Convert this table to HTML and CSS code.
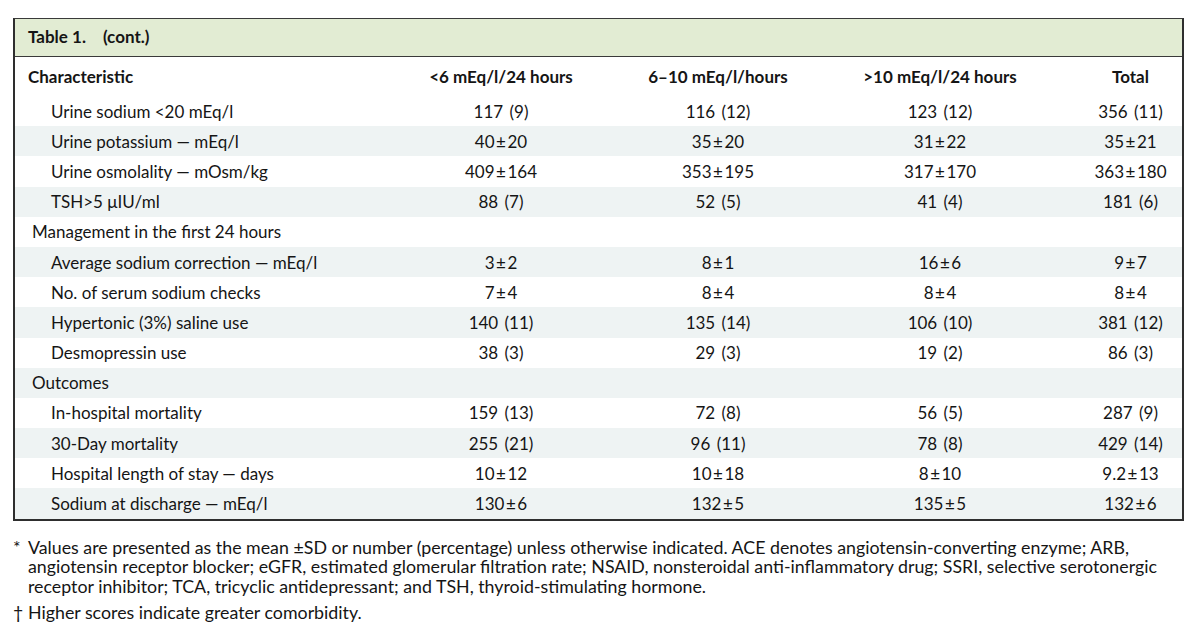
FILE: index.html
```html
<!DOCTYPE html>
<html>
<head>
<meta charset="utf-8">
<link rel="stylesheet" href="styles.css">
</head>
<body>
<div class="page">
  <div class="tbl">
    <div class="title"><span>Table 1.</span><span class="cont">(cont.)</span></div>
    <div class="row head">
      <div class="c1">Characteristic</div>
      <div class="c">&lt;6 mEq/l/24 hours</div>
      <div class="c">6–10 mEq/l/hours</div>
      <div class="c">&gt;10 mEq/l/24 hours</div>
      <div class="c c5">Total</div>
    </div>
    <div class="row"><div class="c1 sub">Urine sodium &lt;20 mEq/l</div><div class="c">117 (9)</div><div class="c">116 (12)</div><div class="c">123 (12)</div><div class="c c5">356 (11)</div></div>
    <div class="row alt"><div class="c1 sub">Urine potassium — mEq/l</div><div class="c">40<span class="pm">±</span>20</div><div class="c">35<span class="pm">±</span>20</div><div class="c">31<span class="pm">±</span>22</div><div class="c c5">35<span class="pm">±</span>21</div></div>
    <div class="row"><div class="c1 sub">Urine osmolality — mOsm/kg</div><div class="c">409<span class="pm">±</span>164</div><div class="c">353<span class="pm">±</span>195</div><div class="c">317<span class="pm">±</span>170</div><div class="c c5">363<span class="pm">±</span>180</div></div>
    <div class="row alt"><div class="c1 sub">TSH&gt;5 μIU/ml</div><div class="c">88 (7)</div><div class="c">52 (5)</div><div class="c">41 (4)</div><div class="c c5">181 (6)</div></div>
    <div class="row"><div class="c1 sec">Management in the first 24 hours</div><div class="c"></div><div class="c"></div><div class="c"></div><div class="c c5"></div></div>
    <div class="row alt"><div class="c1 sub">Average sodium correction — mEq/l</div><div class="c">3<span class="pm">±</span>2</div><div class="c">8<span class="pm">±</span>1</div><div class="c">16<span class="pm">±</span>6</div><div class="c c5">9<span class="pm">±</span>7</div></div>
    <div class="row"><div class="c1 sub">No. of serum sodium checks</div><div class="c">7<span class="pm">±</span>4</div><div class="c">8<span class="pm">±</span>4</div><div class="c">8<span class="pm">±</span>4</div><div class="c c5">8<span class="pm">±</span>4</div></div>
    <div class="row alt"><div class="c1 sub">Hypertonic (3%) saline use</div><div class="c">140 (11)</div><div class="c">135 (14)</div><div class="c">106 (10)</div><div class="c c5">381 (12)</div></div>
    <div class="row"><div class="c1 sub">Desmopressin use</div><div class="c">38 (3)</div><div class="c">29 (3)</div><div class="c">19 (2)</div><div class="c c5">86 (3)</div></div>
    <div class="row alt"><div class="c1 sec">Outcomes</div><div class="c"></div><div class="c"></div><div class="c"></div><div class="c c5"></div></div>
    <div class="row"><div class="c1 sub">In-hospital mortality</div><div class="c">159 (13)</div><div class="c">72 (8)</div><div class="c">56 (5)</div><div class="c c5">287 (9)</div></div>
    <div class="row alt"><div class="c1 sub">30-Day mortality</div><div class="c">255 (21)</div><div class="c">96 (11)</div><div class="c">78 (8)</div><div class="c c5">429 (14)</div></div>
    <div class="row"><div class="c1 sub">Hospital length of stay — days</div><div class="c">10<span class="pm">±</span>12</div><div class="c">10<span class="pm">±</span>18</div><div class="c">8<span class="pm">±</span>10</div><div class="c c5">9.2<span class="pm">±</span>13</div></div>
    <div class="row alt"><div class="c1 sub">Sodium at discharge — mEq/l</div><div class="c">130<span class="pm">±</span>6</div><div class="c">132<span class="pm">±</span>5</div><div class="c">135<span class="pm">±</span>5</div><div class="c c5">132<span class="pm">±</span>6</div></div>
  </div>
  <div class="notes">
    <p class="note"><span class="mark">*</span><span>Values are presented as the mean ±SD or number (percentage) unless otherwise indicated. ACE denotes angiotensin-converting enzyme; ARB,<br>angiotensin receptor blocker; eGFR, estimated glomerular filtration rate; NSAID, nonsteroidal anti-inflammatory drug; SSRI, selective serotonergic<br>receptor inhibitor; TCA, tricyclic antidepressant; and TSH, thyroid-stimulating hormone.</span></p>
    <p class="note"><span class="mark">†</span><span>Higher scores indicate greater comorbidity.</span></p>
  </div>
</div>
</body>
</html>
```

FILE: styles.css
```css
html, body {
  margin: 0;
  padding: 0;
  background: #ffffff;
}
body {
  font-family: Lato, "Open Sans", sans-serif;
  font-size: 17px;
  color: #151515;
}
.page {
  padding: 18px 0 0 13px;
}
.tbl {
  width: 1167px;
  border: 2px solid #2e2e2e;
  border-top: 1px solid #3a3a3a;
}
.title {
  height: 38px;
  box-sizing: border-box;
  padding-bottom: 3px;
  background: #e2ecd3;
  border-bottom: 1px solid #3a3a3a;
  display: flex;
  align-items: center;
  padding-left: 13px;
  font-weight: 700;
  gap: 17px;
}
.row {
  display: grid;
  grid-template-columns: 376px 220px 214px 230px 127px;
  height: 30.2px;
  align-items: center;
}
.row.head {
  height: 39px;
  font-weight: 700;
  padding-bottom: 1px;
  box-sizing: border-box;
}
.row.alt {
  background: #eef3f3;
}
.c1 {
  padding-left: 13px;
  white-space: nowrap;
}
.c1.sec {
  padding-left: 17px;
}
.c1.sub {
  padding-left: 36px;
}
.c {
  text-align: center;
  white-space: nowrap;
  word-spacing: 2px;
}
.head .c {
  word-spacing: 0;
}
.pm {
  margin: 0 1.5px;
}
.c5 {
  padding-left: 24px;
}
.notes {
  margin-top: 17px;
}
.note {
  margin: 0 0 6.4px 0;
  display: flex;
  line-height: 19.6px;
  font-size: 17.8px;
}
.mark {
  width: 15px;
  flex: none;
}
```
